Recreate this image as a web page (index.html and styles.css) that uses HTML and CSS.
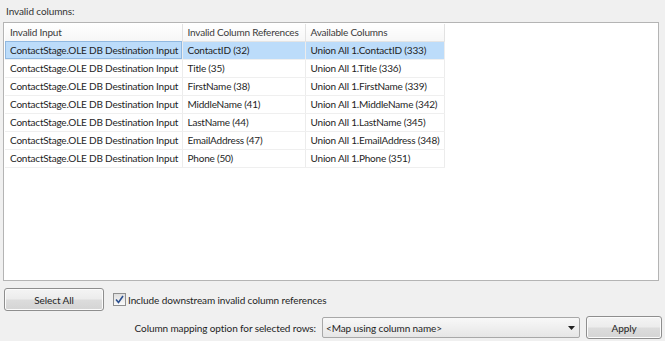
FILE: index.html
```html
<!DOCTYPE html>
<html lang="en">
<head>
  <meta charset="UTF-8">
  <title>Invalid columns</title>
  <link rel="stylesheet" href="styles.css">
</head>
<body>
  <div class="dialog">
    <div class="caption">Invalid columns:</div>

    <div class="grid-box">
      <table class="grid">
        <thead>
          <tr>
            <th class="c1">Invalid Input</th>
            <th class="c2">Invalid Column References</th>
            <th class="c3">Available Columns</th>
          </tr>
        </thead>
        <tbody>
          <tr class="selected">
            <td class="focus">ContactStage.OLE DB Destination Input</td>
            <td>ContactID (32)</td>
            <td>Union All 1.ContactID (333)</td>
          </tr>
          <tr>
            <td>ContactStage.OLE DB Destination Input</td>
            <td>Title (35)</td>
            <td>Union All 1.Title (336)</td>
          </tr>
          <tr>
            <td>ContactStage.OLE DB Destination Input</td>
            <td>FirstName (38)</td>
            <td>Union All 1.FirstName (339)</td>
          </tr>
          <tr>
            <td>ContactStage.OLE DB Destination Input</td>
            <td>MiddleName (41)</td>
            <td>Union All 1.MiddleName (342)</td>
          </tr>
          <tr>
            <td>ContactStage.OLE DB Destination Input</td>
            <td>LastName (44)</td>
            <td>Union All 1.LastName (345)</td>
          </tr>
          <tr>
            <td>ContactStage.OLE DB Destination Input</td>
            <td>EmailAddress (47)</td>
            <td>Union All 1.EmailAddress (348)</td>
          </tr>
          <tr>
            <td>ContactStage.OLE DB Destination Input</td>
            <td>Phone (50)</td>
            <td>Union All 1.Phone (351)</td>
          </tr>
        </tbody>
      </table>
    </div>

    <div class="row-one">
      <button class="btn select-all">Select All</button>
      <label class="check">
        <span class="box">
          <svg width="9" height="9" viewBox="0 0 9 9"><path d="M1 4.5 L3.5 7.5 L8 1" fill="none" stroke="#2b4f8f" stroke-width="1.6"/></svg>
        </span>
        Include downstream invalid column references
      </label>
    </div>

    <div class="row-two">
      <span class="map-label">Column mapping option for selected rows:</span>
      <div class="combo">
        <span>&lt;Map using column name&gt;</span>
        <svg width="7" height="4" viewBox="0 0 7 4"><path d="M0 0 H7 L3.5 4 Z" fill="#222"/></svg>
      </div>
      <button class="btn apply">Apply</button>
    </div>
  </div>
</body>
</html>
```

FILE: styles.css
```css
* {
  box-sizing: border-box;
  margin: 0;
  padding: 0;
}

body {
  background: #f0f0f0;
  color: #1e1e1e;
  font-family: Lato, 'Liberation Sans', sans-serif;
  font-size: 10px;
  letter-spacing: -0.1px;
  width: 665px;
  height: 341px;
  overflow: hidden;
}

.dialog {
  padding: 4px 6px 0 3px;
}

.caption {
  padding-left: 3px;
  height: 18px;
  line-height: 15px;
  color: #333;
}

.grid-box {
  background: #fff;
  border: 1px solid #b4b4b4;
  height: 259px;
  padding: 1px;
}

.grid {
  border-collapse: collapse;
  table-layout: fixed;
  width: 439px;
}

.grid th,
.grid td {
  height: 18px;
  padding: 0 5px;
  text-align: left;
  white-space: nowrap;
  overflow: hidden;
  font-weight: normal;
  letter-spacing: -0.2px;
  border-right: 1px solid #ececec;
  border-bottom: 1px solid #efefef;
}

.grid th {
  height: 17px;
  color: #3a3a3a;
  background: linear-gradient(#ffffff, #f6f6f6);
  border-right: 1px solid #e2e2e2;
  border-bottom: 1px solid #e4e4e4;
}

.c1 { width: 177px; }
.c2 { width: 123px; }
.c3 { width: 139px; }

.selected td {
  background: #bcdcfa;
}

.selected td.focus {
  outline: 1px solid #90b8e0;
  outline-offset: -1px;
}

.row-one {
  display: flex;
  align-items: center;
  margin-top: 7px;
  padding-left: 1px;
}

.btn {
  font-family: inherit;
  font-size: 10px;
  letter-spacing: inherit;
  color: #1e1e1e;
  border: 1px solid #8e8e8e;
  border-radius: 3px;
  background: linear-gradient(#f4f4f4 0%, #ececec 48%, #dcdcdc 52%, #d4d4d4 100%);
  box-shadow: inset 0 0 0 1px #fbfbfb;
}

.select-all {
  width: 100px;
  height: 23px;
}

.check {
  display: flex;
  align-items: center;
  margin-left: 9px;
  gap: 2px;
}

.box {
  width: 13px;
  height: 13px;
  border: 1px solid #8f8f8f;
  background: linear-gradient(#dedede, #fafafa);
  display: flex;
  align-items: center;
  justify-content: center;
}

.row-two {
  display: flex;
  align-items: center;
  justify-content: flex-end;
  margin-top: 5px;
  margin-right: -3px;
}

.map-label {
  margin-right: 6px;
}

.combo {
  width: 258px;
  height: 21px;
  border: 1px solid #a8a8a8;
  border-radius: 2px;
  background: linear-gradient(#f8f8f8, #e6e6e6);
  display: flex;
  align-items: center;
  justify-content: space-between;
  padding: 0 4px 0 3px;
}

.apply {
  width: 76px;
  height: 23px;
  margin-left: 6px;
}
```
